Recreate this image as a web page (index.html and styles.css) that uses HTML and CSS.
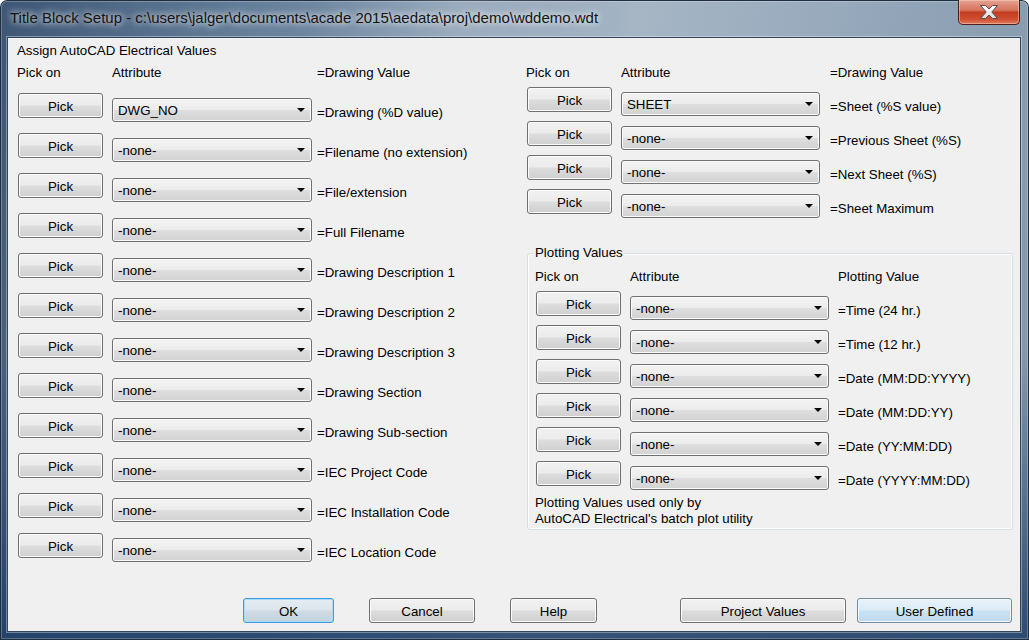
FILE: index.html
```html
<!DOCTYPE html>
<html lang="en">
<head>
  <meta charset="UTF-8" />
  <title>Title Block Setup</title>
  <link rel="stylesheet" href="styles.css">
</head>
<body>
  <div class="window">
    <div class="titlebar">
      <span class="title">Title Block Setup - c:\users\jalger\documents\acade 2015\aedata\proj\demo\wddemo.wdt</span>
      <button class="close-btn" aria-label="Close">
        <svg width="20" height="14" viewBox="0 0 20 14">
          <defs>
            <linearGradient id="xfill" x1="0" y1="0" x2="0" y2="1">
              <stop offset="0" stop-color="#ffffff"/>
              <stop offset="1" stop-color="#d8d8d8"/>
            </linearGradient>
          </defs>
          <polygon points="1.5,0.5 6.5,0.5 10,4 13.5,0.5 18.5,0.5 12.8,7 18.5,13.5 13.5,13.5 10,10 6.5,13.5 1.5,13.5 7.2,7" fill="url(#xfill)" stroke="#5b4a48" stroke-width="1"/>
        </svg>
      </button>
    </div>

    <div class="client">
      <div class="section-title">Assign AutoCAD Electrical Values</div>

      <div class="panels">
        <!-- left: drawing values -->
        <div class="col col-left">
          <div class="head"><span class="h-pick">Pick on</span><span class="h-attr">Attribute</span><span>=Drawing Value</span></div>
          <div class="rows">
            <div class="row"><button class="btn pick">Pick</button><div class="combo"><span>DWG_NO</span><i class="arrow"></i></div><span class="value">=Drawing (%D value)</span></div>
            <div class="row"><button class="btn pick">Pick</button><div class="combo"><span>-none-</span><i class="arrow"></i></div><span class="value">=Filename (no extension)</span></div>
            <div class="row"><button class="btn pick">Pick</button><div class="combo"><span>-none-</span><i class="arrow"></i></div><span class="value">=File/extension</span></div>
            <div class="row"><button class="btn pick">Pick</button><div class="combo"><span>-none-</span><i class="arrow"></i></div><span class="value">=Full Filename</span></div>
            <div class="row"><button class="btn pick">Pick</button><div class="combo"><span>-none-</span><i class="arrow"></i></div><span class="value">=Drawing Description 1</span></div>
            <div class="row"><button class="btn pick">Pick</button><div class="combo"><span>-none-</span><i class="arrow"></i></div><span class="value">=Drawing Description 2</span></div>
            <div class="row"><button class="btn pick">Pick</button><div class="combo"><span>-none-</span><i class="arrow"></i></div><span class="value">=Drawing Description 3</span></div>
            <div class="row"><button class="btn pick">Pick</button><div class="combo"><span>-none-</span><i class="arrow"></i></div><span class="value">=Drawing Section</span></div>
            <div class="row"><button class="btn pick">Pick</button><div class="combo"><span>-none-</span><i class="arrow"></i></div><span class="value">=Drawing Sub-section</span></div>
            <div class="row"><button class="btn pick">Pick</button><div class="combo"><span>-none-</span><i class="arrow"></i></div><span class="value">=IEC Project Code</span></div>
            <div class="row"><button class="btn pick">Pick</button><div class="combo"><span>-none-</span><i class="arrow"></i></div><span class="value">=IEC Installation Code</span></div>
            <div class="row"><button class="btn pick">Pick</button><div class="combo"><span>-none-</span><i class="arrow"></i></div><span class="value">=IEC Location Code</span></div>
          </div>
        </div>

        <!-- right: sheet values + plotting group -->
        <div class="col col-right">
          <div class="head"><span class="h-pick">Pick on</span><span class="h-attr">Attribute</span><span>=Drawing Value</span></div>
          <div class="rows rows-short">
            <div class="row"><button class="btn pick">Pick</button><div class="combo"><span>SHEET</span><i class="arrow"></i></div><span class="value">=Sheet (%S value)</span></div>
            <div class="row"><button class="btn pick">Pick</button><div class="combo"><span>-none-</span><i class="arrow"></i></div><span class="value">=Previous Sheet (%S)</span></div>
            <div class="row"><button class="btn pick">Pick</button><div class="combo"><span>-none-</span><i class="arrow"></i></div><span class="value">=Next Sheet (%S)</span></div>
            <div class="row"><button class="btn pick">Pick</button><div class="combo"><span>-none-</span><i class="arrow"></i></div><span class="value">=Sheet Maximum</span></div>
          </div>

          <div class="group">
            <span class="group-label">Plotting Values</span>
            <div class="head"><span class="h-pick">Pick on</span><span class="h-attr">Attribute</span><span>Plotting Value</span></div>
            <div class="rows rows-short">
              <div class="row"><button class="btn pick">Pick</button><div class="combo"><span>-none-</span><i class="arrow"></i></div><span class="value">=Time (24 hr.)</span></div>
              <div class="row"><button class="btn pick">Pick</button><div class="combo"><span>-none-</span><i class="arrow"></i></div><span class="value">=Time (12 hr.)</span></div>
              <div class="row"><button class="btn pick">Pick</button><div class="combo"><span>-none-</span><i class="arrow"></i></div><span class="value">=Date (MM:DD:YYYY)</span></div>
              <div class="row"><button class="btn pick">Pick</button><div class="combo"><span>-none-</span><i class="arrow"></i></div><span class="value">=Date (MM:DD:YY)</span></div>
              <div class="row"><button class="btn pick">Pick</button><div class="combo"><span>-none-</span><i class="arrow"></i></div><span class="value">=Date (YY:MM:DD)</span></div>
              <div class="row"><button class="btn pick">Pick</button><div class="combo"><span>-none-</span><i class="arrow"></i></div><span class="value">=Date (YYYY:MM:DD)</span></div>
            </div>
            <p class="note">Plotting Values used only by<br>AutoCAD Electrical's batch plot utility</p>
          </div>
        </div>
      </div>

      <div class="footer">
        <button class="btn btn-default btn-ok">OK</button>
        <button class="btn btn-cancel">Cancel</button>
        <button class="btn btn-help">Help</button>
        <button class="btn btn-project">Project Values</button>
        <button class="btn btn-hot btn-user">User Defined</button>
      </div>
    </div>
  </div>
</body>
</html>
```

FILE: styles.css
```css
* {
  box-sizing: border-box;
}

html, body {
  margin: 0;
  background: #ffffff;
}

body {
  width: 1029px;
  height: 640px;
  overflow: hidden;
  font-family: "Liberation Sans", Arial, sans-serif;
  font-size: 13.3px;
  color: #000;
}

.window {
  width: 1029px;
  height: 640px;
  display: flex;
  flex-direction: column;
  border-radius: 7px 7px 0 0;
  background:
    linear-gradient(to bottom, rgba(0, 0, 0, 0) 55%, rgba(24, 56, 98, 0.8) 100%),
    linear-gradient(100deg, #3e5675 0%, #5e7894 18%, #8096ad 38%, #a6b6c5 56%, #93a6b9 78%, #8195aa 100%);
  box-shadow: inset 0 0 0 1px #1f2e40, inset 0 0 0 2px rgba(255, 255, 255, 0.25);
}

/* title bar */
.titlebar {
  height: 37px;
  display: flex;
  align-items: flex-start;
  padding: 0 9px 0 10px;
  background: linear-gradient(100deg, rgba(255, 255, 255, 0) 30%, rgba(255, 255, 255, 0.18) 45%, rgba(255, 255, 255, 0) 60%);
}

.title {
  line-height: 36px;
  font-size: 15px;
  color: #141414;
  white-space: nowrap;
  text-shadow: 0 0 6px rgba(255, 255, 255, 0.9), 0 0 10px rgba(255, 255, 255, 0.6);
}

.close-btn {
  margin-left: auto;
  width: 62px;
  height: 25px;
  padding: 0;
  border: 1px solid #4e1d15;
  border-top: none;
  border-radius: 0 0 5px 5px;
  background: linear-gradient(#e7a394 0%, #d6735e 42%, #c23b1f 52%, #cf4f31 80%, #e17a5c 100%);
  box-shadow: inset 0 0 0 1px rgba(255, 210, 200, 0.5);
  display: flex;
  align-items: center;
  justify-content: center;
}

.close-btn svg {
  display: block;
  margin-top: -1px;
}

/* client area */
.client {
  flex: 1;
  margin: 0 8px 8px 7px;
  padding: 0 0 0 9px;
  background: #f0f0f0;
  border: 1px solid #33465b;
  box-shadow: 0 0 0 1px rgba(255, 255, 255, 0.35);
  display: flex;
  flex-direction: column;
}

.section-title {
  height: 24px;
  padding-top: 1px;
  line-height: 24px;
}

.panels {
  display: flex;
}

.col-left {
  width: 509px;
}

.col-right {
  width: 494px;
}

.head {
  display: flex;
  height: 20px;
  padding-top: 1px;
  line-height: 20px;
}

.head .h-pick {
  width: 95px;
}

.col-left .head .h-attr {
  width: 205px;
}

.col-right .head .h-attr {
  width: 209px;
}

.group .head .h-attr {
  width: 208px;
}

.rows {
  margin-top: 11px;
}

.rows-short {
  margin-top: 5px;
}

.row {
  display: flex;
  align-items: flex-start;
  height: 40px;
}

.rows-short .row {
  height: 34px;
}

/* win7 style buttons */
.btn {
  font: inherit;
  color: #000;
  height: 25px;
  padding: 1px 0 0;
  border: 1px solid #707070;
  border-radius: 3px;
  background: linear-gradient(#f2f2f2 0%, #ebebeb 48%, #dddddd 52%, #cfcfcf 100%);
  box-shadow: inset 0 0 0 1px #fbfbfb;
  cursor: default;
}

.pick {
  width: 85px;
  margin-left: 1px;
}

.combo {
  width: 200px;
  height: 24px;
  margin: 5px 0 0 9px;
  padding: 1px 0 0 5px;
  display: flex;
  align-items: center;
  border: 1px solid #707070;
  border-radius: 3px;
  background: linear-gradient(#f3f3f3 0%, #ececec 48%, #dedede 52%, #d2d2d2 100%);
  box-shadow: inset 0 0 0 1px #fbfbfb;
}

.col-right .combo {
  width: 199px;
}

.arrow {
  margin: 0 6px 1px auto;
  width: 0;
  height: 0;
  border-left: 4px solid transparent;
  border-right: 4px solid transparent;
  border-top: 4px solid #000;
}

.value {
  margin: 12px 0 0 5px;
  line-height: 16px;
  white-space: nowrap;
}

.col-right .value {
  margin-left: 10px;
}

.group .value {
  margin-left: 9px;
}

/* plotting group box */
.group {
  position: relative;
  margin: 30px 0 0 1px;
  width: 486px;
  padding: 12px 0 2px 7px;
  border: 1px solid #d5dfe5;
  border-radius: 3px;
  box-shadow: inset 0 0 0 1px #ffffff;
}

.group-label {
  position: absolute;
  left: 6px;
  top: -9px;
  padding: 0 1px;
  line-height: 16px;
  background: #f0f0f0;
}

.note {
  margin: 0;
  line-height: 16px;
}

/* bottom buttons */
.footer {
  margin-top: auto;
  padding-bottom: 8px;
  display: flex;
}

.btn-ok {
  width: 91px;
  margin-left: 226px;
}

.btn-cancel {
  width: 106px;
  margin-left: 35px;
}

.btn-help {
  width: 87px;
  margin-left: 35px;
}

.btn-project {
  width: 166px;
  margin-left: 83px;
}

.btn-user {
  width: 155px;
  margin-left: 11px;
}

.btn-default {
  border-color: #3d9be6;
  background: linear-gradient(#e6edf3 0%, #dce5ed 48%, #cfdbe5 52%, #c4d3df 100%);
  box-shadow: inset 0 0 0 1px #a9dcf7;
}

.btn-hot {
  border-color: #6e8ca6;
  background: linear-gradient(#e8f2fa 0%, #dcebf7 48%, #cbe2f3 52%, #bfd9ed 100%);
  box-shadow: inset 0 0 0 1px #f4f9fd;
}
```
